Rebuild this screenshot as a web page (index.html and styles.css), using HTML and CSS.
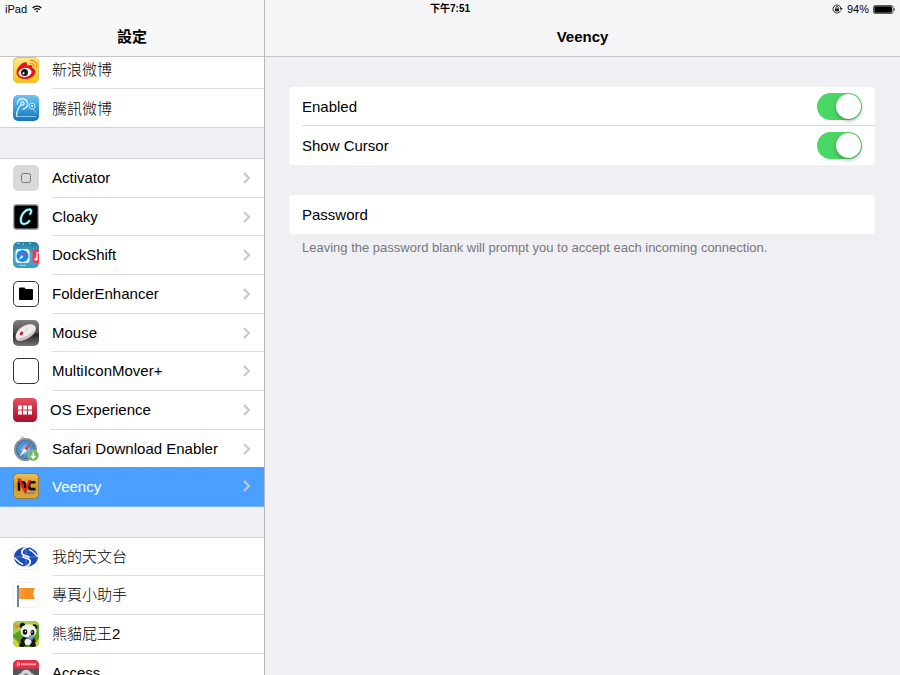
FILE: index.html
```html
<!DOCTYPE html>
<html lang="zh-Hant">
<head>
  <meta charset="UTF-8">
  <meta name="viewport" content="width=device-width, initial-scale=1.0">
  <title>設定</title>
  <link rel="stylesheet" href="styles.css">
</head>
<body>

  <div class="status-bar">
    <div class="status-left">
      <span>iPad</span>
      <svg class="wifi" viewBox="0 0 10 8" width="10" height="8" fill="none" stroke="#111" stroke-width="1.3">
        <path d="M.6 3C3 .5 7 .5 9.4 3"/>
        <path d="M2.3 4.8c1.5-1.5 3.9-1.5 5.4 0"/>
        <path d="M3.7 6 5 7.5 6.3 6Q5 5 3.7 6z" fill="#111" stroke="none"/>
      </svg>
    </div>
    <div class="status-time">下午7:51</div>
    <div class="status-right">
      <svg class="lock" viewBox="0 0 11 10" width="11" height="10" fill="none" stroke="#111">
        <path d="M8.6 6.8A4 4 0 1 1 9 4.6" stroke-width=".9"/>
        <path d="M7.5 4.2h3.2L9.1 6.2z" fill="#111" stroke="none"/>
        <path d="M3 4.6h4v2.7H3z" fill="#111" stroke="none"/>
        <path d="M3.8 4.8V3.7a1.2 1.2 0 0 1 2.4 0v1.1" stroke-width=".8"/>
      </svg>
      <span>94%</span>
      <svg class="battery" viewBox="0 0 22 9" width="22" height="9">
        <rect x=".5" y=".5" width="19.5" height="8" rx="1.5" fill="#fff" stroke="#333" stroke-width=".8"/>
        <rect x="1.3" y="1.3" width="17.6" height="6.4" rx=".6" fill="#000"/>
        <path d="M20.6 3q1.2.2 1.2 1.5T20.6 6z" fill="#222"/>
      </svg>
    </div>
  </div>

  <div class="split-view">
    <aside class="sidebar">
      <header class="nav-bar">
        <h1>設定</h1>
      </header>

      <nav class="menu">
        <ul class="group social">
          <li><a class="row" href="#sina">
            <svg class="icon" viewBox="0 0 26 26">
              <defs><linearGradient id="yellow" x2="0" y2="1"><stop stop-color="#fce98c"/><stop offset=".55" stop-color="#fcd94d"/><stop offset="1" stop-color="#fbc40d"/></linearGradient></defs>
              <rect x=".4" y=".4" width="25.2" height="25.2" rx="4.5" fill="url(#yellow)" stroke="#e2ae2a" stroke-width=".8"/>
              <path d="M3.500 15.500C3.500 11 9 5 12.500 5.200c2 .2 2 2.500 1.500 3.500 3-1.200 6-1 5.300 2.300 2 .6 3 1.600 3 3.700 0 4.300-5 7.300-10 7.300S3.500 19.500 3.500 15.500z" fill="#e3141b"/>
              <ellipse cx="12" cy="15.500" rx="6.600" ry="4.600" fill="#fff" transform="rotate(-8 12 15.500)"/>
              <circle cx="11.500" cy="15.500" r="3.500" fill="#161616"/>
              <circle cx="10.500" cy="16.300" r="1.100" fill="#fff"/>
              <path d="M17.500 3.500c4-.8 7.300 3 5.800 7M17.800 6.600c2-.3 3.400 1.200 2.900 3.100" fill="none" stroke="#f59b18" stroke-width="1.500" stroke-linecap="round"/>
            </svg>
            <span class="label">新浪微博</span>
          </a></li>
          <li><a class="row" href="#tencent">
            <svg class="icon" viewBox="0 0 26 26">
              <defs><linearGradient id="sky" x2="0" y2="1"><stop stop-color="#6fc3ee"/><stop offset=".5" stop-color="#359fdc"/><stop offset="1" stop-color="#1674ba"/></linearGradient></defs>
              <rect width="26" height="26" rx="5" fill="url(#sky)"/>
              <g fill="none" stroke="#e2f4ff">
                <path d="M3.500 21.500C3.500 16.500 5 12.500 8.500 9.500" stroke-width="1.300"/>
                <path d="M4.300 9.500a5.200 5.200 0 1 1 5.200 4.700" stroke-width="1.400"/>
                <circle cx="9.500" cy="8.500" r="1.600" stroke-width="1.200"/>
                <circle cx="19" cy="11" r="3" stroke-width=".8"/>
                <path d="M20 14q2 3 3.500 3.500M3 21.500h20" stroke-width=".6"/>
              </g>
              <circle cx="19" cy="11" r="1.100" fill="#e2f4ff"/>
            </svg>
            <span class="label">騰訊微博</span>
          </a></li>
        </ul>

        <ul class="group tweaks">
          <li><a class="row" href="#activator">
            <svg class="icon" viewBox="0 0 26 26">
              <rect width="26" height="26" rx="5" fill="#d9d9d9"/>
              <rect x="8.500" y="8.500" width="9" height="9" rx="1.800" fill="none" stroke="#777"/>
            </svg>
            <span class="label">Activator</span>
            <svg class="chevron" viewBox="0 0 8 12"><path d="M1 1l5 5-5 5"/></svg>
          </a></li>
          <li><a class="row" href="#cloaky">
            <svg class="icon" viewBox="0 0 26 26">
              <rect x=".7" y=".7" width="24.600" height="24.600" rx="2.500" fill="#000" stroke="#aaa" stroke-width="1.400"/>
              <path d="M17 10c2-2 1.500-5-1-4.500C10.500 6.500 7.500 12.500 7.800 16.500c.4 5 6 4 8.500.5" fill="none" stroke="#147f86" stroke-width="3" stroke-linecap="round"/>
              <path d="M17 10c2-2 1.500-5-1-4.500C10.500 6.500 7.500 12.500 7.800 16.500c.4 5 6 4 8.500.5" fill="none" stroke="#d5ffff" stroke-width="1.600" stroke-linecap="round"/>
            </svg>
            <span class="label">Cloaky</span>
            <svg class="chevron" viewBox="0 0 8 12"><path d="M1 1l5 5-5 5"/></svg>
          </a></li>
          <li><a class="row" href="#dockshift">
            <svg class="icon" viewBox="0 0 26 26">
              <defs><linearGradient id="sea" x2="0" y2="1"><stop stop-color="#237f9f"/><stop offset=".5" stop-color="#4fa9c4"/><stop offset="1" stop-color="#3b9dbd"/></linearGradient><clipPath id="dock"><rect width="26" height="26" rx="5"/></clipPath></defs>
              <g clip-path="url(#dock)">
                <rect width="26" height="26" fill="url(#sea)"/>
                <rect x="2.500" y="7" width="14" height="14" rx="3" fill="#e9f3fa"/>
                <circle cx="9.500" cy="14" r="6" fill="#1688ec"/>
                <path d="M13.500 10 8.600 13.100l1.800 1.800z" fill="#f33"/>
                <path d="M5.500 18l4.900-3.100-1.800-1.800z" fill="#fff"/>
                <rect x="19.500" y="7" width="12" height="14" rx="3" fill="#f6364d"/>
                <path d="M24 17v-6l3-1" fill="none" stroke="#fff" stroke-width="1.300"/>
                <circle cx="23" cy="17.200" r="1.500" fill="#fff"/>
                <path d="M6 23.300h7M4 1.500h3M9 2h2M16 1.500h2" stroke="#b7dfea" stroke-width=".9"/>
              </g>
            </svg>
            <span class="label">DockShift</span>
            <svg class="chevron" viewBox="0 0 8 12"><path d="M1 1l5 5-5 5"/></svg>
          </a></li>
          <li><a class="row" href="#folderenhancer">
            <svg class="icon" viewBox="0 0 26 26">
              <rect x=".5" y=".5" width="25" height="25" rx="4.500" fill="#fff" stroke="#333"/>
              <path d="M6 7.500q0-1 1-1h4q1 0 1.300 1l.2.500H19q1 0 1 1V18q0 1-1 1H7q-1 0-1-1z" fill="#000"/>
            </svg>
            <span class="label">FolderEnhancer</span>
            <svg class="chevron" viewBox="0 0 8 12"><path d="M1 1l5 5-5 5"/></svg>
          </a></li>
          <li><a class="row" href="#mouse">
            <svg class="icon" viewBox="0 0 26 26">
              <defs><linearGradient id="smoke" x2="0" y2="1"><stop stop-color="#808080"/><stop offset=".5" stop-color="#4a4a4a"/><stop offset=".55" stop-color="#222"/><stop offset="1" stop-color="#777"/></linearGradient></defs>
              <rect width="26" height="26" rx="5" fill="url(#smoke)"/>
              <path d="M2.500 17C2 12 9 4.500 16.500 4c4.500-.3 7 2 6.500 5.500C22 15 13 20.500 7.500 21 4.500 21.200 2.800 19.500 2.500 17z" fill="#ececec" stroke="#a44" stroke-width=".4"/>
              <path d="M5 18C10 18.500 18 14.500 22.500 8.500 21.500 15 12 20.500 7 20.500z" fill="#c4c4c4"/>
              <ellipse cx="8.500" cy="13.500" rx="1.500" ry="2" fill="#b4232b" transform="rotate(35 8.500 13.500)"/>
              <path d="M10 12.500q3-1 5-5" fill="none" stroke="#c7a8a8" stroke-width=".5"/>
            </svg>
            <span class="label">Mouse</span>
            <svg class="chevron" viewBox="0 0 8 12"><path d="M1 1l5 5-5 5"/></svg>
          </a></li>
          <li><a class="row" href="#multiiconmover">
            <svg class="icon" viewBox="0 0 26 26">
              <rect x=".5" y=".5" width="25" height="25" rx="4.500" fill="#fff" stroke="#333"/>
            </svg>
            <span class="label">MultiIconMover+</span>
            <svg class="chevron" viewBox="0 0 8 12"><path d="M1 1l5 5-5 5"/></svg>
          </a></li>
          <li><a class="row" href="#osexperience">
            <svg class="icon icon-small" viewBox="0 0 24 24">
              <defs><linearGradient id="ruby" x2="0" y2="1"><stop stop-color="#e4505f"/><stop offset="1" stop-color="#ad0d2c"/></linearGradient></defs>
              <rect width="24" height="24" rx="4.500" fill="url(#ruby)"/>
              <path d="M5 7.500h4v4H5zM10 7.500h4v4h-4zM15 7.500h4v4h-4zM5 12.500h4v4H5zM10 12.500h4v4h-4zM15 12.500h4v4h-4z" fill="#fff"/>
            </svg>
            <span class="label">OS Experience</span>
            <svg class="chevron" viewBox="0 0 8 12"><path d="M1 1l5 5-5 5"/></svg>
          </a></li>
          <li><a class="row" href="#safaridownload">
            <svg class="icon" viewBox="0 0 26 26">
              <defs><radialGradient id="compass"><stop stop-color="#8bc5f2"/><stop offset="1" stop-color="#2465ad"/></radialGradient></defs>
              <circle cx="9.500" cy="2" r="1.300" fill="none" stroke="#999" stroke-width=".8"/>
              <circle cx="12.500" cy="13.500" r="10.500" fill="url(#compass)" stroke="#8c8f94" stroke-width="2"/>
              <circle cx="12.500" cy="13.500" r="7.500" fill="none" stroke="#c0dbf2" stroke-width=".7" stroke-dasharray="1 1.500"/>
              <path d="M12.500 8l1.200 4.300 4.300 1.200-4.300 1.200-1.200 4.300-1.200-4.300L7 13.500l4.300-1.200z" fill="#94c0e8"/>
              <path d="M18.500 6.500l-7.300 5.700 2.600 2.600z" fill="#d8464a"/>
              <path d="M6.500 20.500l7.300-5.700-2.600-2.600z" fill="#f2f2f2"/>
              <circle cx="20.300" cy="19.500" r="5.200" fill="#5fb94d" stroke="#a6d69b" stroke-width=".8"/>
              <path d="M20.300 16v6M17.800 19.800l2.500 2.500 2.500-2.500" fill="none" stroke="#fff" stroke-width="1.600"/>
            </svg>
            <span class="label">Safari Download Enabler</span>
            <svg class="chevron" viewBox="0 0 8 12"><path d="M1 1l5 5-5 5"/></svg>
          </a></li>
          <li><a class="row selected" href="#veency" aria-current="page">
            <svg class="icon" viewBox="0 0 26 26">
              <defs><linearGradient id="gold" x2="0" y2="1"><stop stop-color="#eec155"/><stop offset=".5" stop-color="#cf992d"/><stop offset="1" stop-color="#e0aa3a"/></linearGradient></defs>
              <rect x=".4" y=".4" width="25.200" height="25.200" rx="4.500" fill="url(#gold)" stroke="#8d6b25" stroke-width=".8"/>
              <path d="M22.500 9.200h-4q-2.300 0-2.300 2.300v2.300q0 2.300 2.300 2.300h4" fill="none" stroke="#130b05" stroke-width="2.600"/>
              <path d="M6 17.500V9.200h3.500q2.500 0 2.500 2.500v5.800" fill="none" stroke="#130b05" stroke-width="2.600"/>
              <path d="M4 5.500h4l4.500 10L15.500 7H18L12.500 21.500z" fill="#e3231b"/>
              <path d="M6 17.500V10M9.500 9.200q2.500 0 2.500 2.500v3" fill="none" stroke="#130b05" stroke-width="2"/>
              <path d="M13 20h9" stroke="#71619a"/>
            </svg>
            <span class="label">Veency</span>
            <svg class="chevron" viewBox="0 0 8 12"><path d="M1 1l5 5-5 5"/></svg>
          </a></li>
        </ul>

        <ul class="group apps">
          <li><a class="row" href="#observatory">
            <svg class="icon" viewBox="0 0 26 26">
              <rect x=".5" y=".5" width="25" height="25" rx="5" fill="#fff" stroke="#f0f0f2"/>
              <ellipse cx="13" cy="13" rx="12" ry="10" fill="#1a4db6"/>
              <g fill="none" stroke="#fff">
                <path d="M17 2C10 4 8 6.500 9 9.500c1 2.500 5 2 7.500 4" stroke-width="1.800"/>
                <path d="M9 24c7-2 9-4.500 8-7.500-1-2.500-5-2-7.500-4" stroke-width="1.800"/>
                <path d="M0 13.500c3-.5 4 5 10 7M26 12.500c-3 .5-4-5-10-7" stroke-width="1.400"/>
                <path d="M2 13h22M13 3v20" stroke="#9db9e8" stroke-width=".5"/>
              </g>
            </svg>
            <span class="label">我的天文台</span>
          </a></li>
          <li><a class="row" href="#pages">
            <svg class="icon" viewBox="0 0 26 26">
              <defs><linearGradient id="flag" x2="1"><stop stop-color="#f9a13a"/><stop offset=".5" stop-color="#f88a1e"/><stop offset="1" stop-color="#f7931f"/></linearGradient></defs>
              <rect x=".5" y=".5" width="25" height="25" rx="5" fill="#fff" stroke="#f0f0f2"/>
              <path d="M6 6h16l-2 5.500 2 5.500H6z" fill="url(#flag)"/>
              <path d="M5 4v21" stroke="#444e61" stroke-width="1.400"/>
              <circle cx="5" cy="4.300" r="1.100" fill="#444e61"/>
            </svg>
            <span class="label">專頁小助手</span>
          </a></li>
          <li><a class="row" href="#panda">
            <svg class="icon" viewBox="0 0 26 26">
              <defs><clipPath id="tile"><rect width="26" height="26" rx="5"/></clipPath></defs>
              <g clip-path="url(#tile)">
                <rect width="26" height="26" fill="#5c9c24"/>
                <path d="M0 0h26v4L14 5 0 14z" fill="#a8ce48"/>
                <path d="M0 26V16l5 5 3 5zM20 26l6-9v9z" fill="#d5cf39"/>
                <path d="M1 2l2 3 3-1 1 3M2 6h4" fill="none" stroke="#ef8144" stroke-width="1.300"/>
                <ellipse cx="15" cy="20" rx="7.500" ry="5" fill="#171717"/>
                <circle cx="9.500" cy="4.500" r="2.700" fill="#151515"/>
                <circle cx="21.500" cy="6" r="2.700" fill="#151515"/>
                <ellipse cx="15.500" cy="10" rx="8" ry="6.800" fill="#f4f5f0"/>
                <ellipse cx="12" cy="11" rx="2.300" ry="2.800" fill="#151515"/>
                <ellipse cx="19.500" cy="11.500" rx="2" ry="2.700" fill="#151515"/>
                <circle cx="12.500" cy="10.500" r=".7" fill="#fff"/>
                <circle cx="19" cy="11" r=".7" fill="#fff"/>
                <ellipse cx="15" cy="21" rx="3.500" ry="3.500" fill="#eee"/>
                <circle cx="18" cy="16.500" r="2.500" fill="#4b93cf"/>
                <path d="M16.500 17.500l3-2" stroke="#e7a83c" stroke-width="1.200"/>
                <ellipse cx="9" cy="24" rx="3" ry="2" fill="#181818"/>
                <ellipse cx="20" cy="24" rx="3" ry="2" fill="#181818"/>
              </g>
            </svg>
            <span class="label">熊貓屁王2</span>
          </a></li>
          <li><a class="row" href="#access">
            <svg class="icon" viewBox="0 0 26 26">
              <defs><clipPath id="tile2"><rect width="26" height="26" rx="5"/></clipPath></defs>
              <g clip-path="url(#tile2)">
                <rect width="26" height="26" fill="#55575b"/>
                <rect width="26" height="8.500" fill="#e52f45"/>
                <path d="M4.500 2.500v3.500M6.200 2.500v3.500" stroke="#fff"/>
                <path d="M8 4.300h15" stroke="#ffd7dc" stroke-width="2" stroke-dasharray="1.400 .5"/>
                <path d="M7 20a3.500 3.500 0 0 1 1-6.800 5.500 5.500 0 0 1 10.300 0A3.500 3.500 0 0 1 19 20z" fill="#d4d5d7"/>
                <circle cx="13" cy="16" r="2.400" fill="#77797d"/>
              </g>
            </svg>
            <span class="label">Access</span>
          </a></li>
        </ul>
      </nav>
    </aside>

    <main class="detail">
      <header class="nav-bar">
        <h2>Veency</h2>
      </header>

      <form class="settings">
        <div class="card">
          <div class="field">
            <label for="enabled">Enabled</label>
            <input class="switch" type="checkbox" id="enabled" checked>
          </div>
          <div class="field">
            <label for="cursor">Show Cursor</label>
            <input class="switch" type="checkbox" id="cursor" checked>
          </div>
        </div>

        <div class="card">
          <div class="field">
            <label for="password">Password</label>
            <input class="text-input" type="password" id="password" aria-describedby="hint">
          </div>
        </div>
        <p class="hint" id="hint">Leaving the password blank will prompt you to accept each incoming connection.</p>
      </form>
    </main>
  </div>

</body>
</html>
```
FILE: styles.css
```css
* {
  box-sizing: border-box;
}

body {
  margin: 0;
  font-family: "Liberation Sans", "Noto Sans CJK TC", sans-serif;
  font-size: 15px;
  font-weight: 300;
  color: #000;
  background-color: #efeff4;
}

h1,
h2 {
  margin: 0;
  font-size: 15px;
  line-height: 20px;
}

ul {
  list-style: none;
  margin: 0;
  padding: 0;
}

/* status bar lies over both panes */
.status-bar {
  position: absolute;
  top: 0;
  left: 0;
  right: 0;
  z-index: 2;
  display: grid;
  grid-template-columns: 1fr auto 1fr;
  align-items: center;
  height: 18px;
  padding: 0 5px;
  font-size: 11px;
  line-height: 18px;
}

.status-left,
.status-right {
  display: flex;
  align-items: center;
  gap: 5px;
}

.status-right {
  justify-content: flex-end;
  gap: 4px;
}

.status-time {
  font-size: 10px;
  font-weight: bold;
}

.split-view {
  display: flex;
  height: 100vh;
  overflow: hidden;
}

.sidebar {
  display: flex;
  flex-direction: column;
  flex: 0 0 265px;
  border-right: 1px solid #b5b5ba;
}

.nav-bar {
  position: relative;
  z-index: 1;
  flex: none;
  padding: 27px 0 9px;
  text-align: center;
  background-color: #f5f5f7;
  border-bottom: 1px solid #c5c5ca;
}

.sidebar .nav-bar {
  background-color: #f7f8f8;
}

/* the list is scrolled a little way under the nav bar */
.menu {
  flex: 1;
  min-height: 0;
  margin-top: -8px;
  overflow: hidden;
}

.group {
  margin-bottom: 30px;
  background-color: #fff;
  border-top: 1px solid #d2d2d7;
}

.row {
  display: flex;
  align-items: center;
  gap: 13px;
  position: relative;
  height: 39px;
  padding-left: 13px;
  color: #000;
  text-decoration: none;
}

.tweaks li:nth-child(3n+2) .row,
.apps li:first-child .row {
  height: 38px;
}

.label {
  flex: 1;
  align-self: stretch;
  line-height: 38px;
  white-space: nowrap;
  border-bottom: 1px solid #dedee1;
}

.social .label {
  line-height: 40px;
}

.group li:last-child .row {
  border-bottom: 1px solid #d2d2d7;
}

.group li:last-child .label {
  border-bottom: none;
}

.icon {
  flex: none;
  width: 26px;
  height: 26px;
  margin-bottom: 1px;
}

.social .icon {
  margin-bottom: 0;
}

.icon-small {
  width: 24px;
  height: 24px;
}

.chevron {
  position: absolute;
  right: 13px;
  width: 8px;
  height: 12px;
  margin-bottom: 1px;
  fill: none;
  stroke: #c7c7cc;
  stroke-width: 2;
}

.group li:last-child .selected {
  height: 40px;
  margin-top: -1px;
  color: #fff;
  background-color: #4b9fff;
  border-bottom-color: #78b4f8;
}

.selected .label {
  line-height: 40px;
}

.detail {
  flex: 1;
  min-width: 0;
}

.settings {
  padding: 30px 25px 0 24px;
}

.card {
  margin-bottom: 30px;
  background-color: #fff;
  border-radius: 4px;
}

.field {
  display: flex;
  align-items: center;
  justify-content: space-between;
  height: 39px;
  margin-left: 13px;
  padding-right: 13px;
  border-bottom: 1px solid #dedee1;
}

.field:last-child {
  border-bottom-color: #fff0;
}

.switch {
  appearance: none;
  position: relative;
  width: 45px;
  height: 27px;
  margin: 0;
  border-radius: 14px;
  background-color: #ddd;
}

.switch::before {
  content: "";
  position: absolute;
  top: 1px;
  left: 1px;
  width: 25px;
  height: 25px;
  border-radius: 50%;
  background-color: #fff;
  box-shadow: 0 2px 4px rgba(0, 0, 0, 0.3);
}

.switch:checked {
  background-color: #4bd763;
}

.switch:checked::before {
  left: 19px;
}

.text-input {
  flex: 1;
  min-width: 0;
  margin-left: 20px;
  padding: 0;
  border: none;
  outline: none;
  background: none;
  font: inherit;
}

.hint {
  margin: -24px 13px 0;
  font-size: 13px;
  line-height: 16px;
  color: #77777c;
}
```
